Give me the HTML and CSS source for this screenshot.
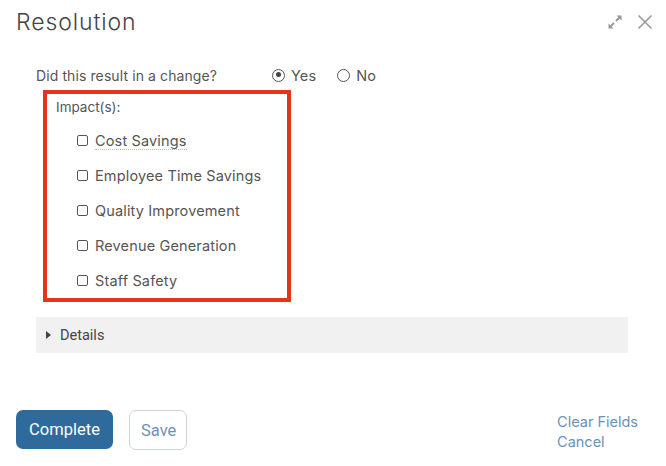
FILE: index.html
```html
<!DOCTYPE html>
<html>
<head>
<meta charset="utf-8">
<link rel="stylesheet" href="styles.css">
</head>
<body>
<div class="dialog">
  <div class="header">
    <h1 class="title">Resolution</h1>
    <div class="tools">
      <svg class="icon" width="18" height="18" viewBox="0 0 18 18"><g fill="#999"><path d="M10.5 2.5h5v5l-1.8-1.8-3 3-1.4-1.4 3-3z"/><path d="M7.5 15.5h-5v-5l1.8 1.8 3-3 1.4 1.4-3 3z"/></g></svg>
      <svg class="icon" width="18" height="18" viewBox="0 0 18 18"><path d="M2.5 2.5l13 13M15.5 2.5l-13 13" stroke="#999" stroke-width="1.6" fill="none"/></svg>
    </div>
  </div>
  <div class="form">
    <div class="question">
      <span class="qlabel">Did this result in a change?</span>
      <label class="radio"><span class="rdot checked"></span>Yes</label>
      <label class="radio"><span class="rdot"></span>No</label>
    </div>
    <div class="impact">
      <div class="impact-label">Impact(s):</div>
      <ul class="checks">
        <li><span class="cbox"></span><span class="dotted">Cost Savings</span></li>
        <li><span class="cbox"></span>Employee Time Savings</li>
        <li><span class="cbox"></span>Quality Improvement</li>
        <li><span class="cbox"></span>Revenue Generation</li>
        <li><span class="cbox"></span>Staff Safety</li>
      </ul>
    </div>
    <div class="details"><span class="caret"></span>Details</div>
  </div>
  <div class="footer">
    <div class="buttons">
      <button class="btn primary">Complete</button>
      <button class="btn secondary">Save</button>
    </div>
    <div class="links">
      <a class="link">Clear Fields</a>
      <a class="link">Cancel</a>
    </div>
  </div>
</div>
</body>
</html>
```
FILE: styles.css
```css
html, body { margin: 0; padding: 0; background: #fff; }
body { font-family: Inter, "Noto Sans", sans-serif; color: #555; width: 666px; height: 466px; overflow: hidden; }
.dialog { display: flex; flex-direction: column; height: 466px; }
.header { display: flex; justify-content: space-between; align-items: center; padding: 7px 12px 0 16px; height: 29px; }
.title { margin: 0; font-size: 23px; font-weight: 300; color: #444; letter-spacing: 0.9px; }
.tools { display: flex; gap: 12px; align-items: center; }
.icon { display: block; }
.form { padding: 30px 38px 0 36px; }
.question { display: flex; align-items: center; font-size: 14px; height: 18px; letter-spacing: 0.1px; }
.qlabel { width: 236px; }
.radio { display: flex; align-items: center; gap: 6px; margin-right: 21px; color: #555; font-size: 14.5px; }
.rdot { width: 13px; height: 13px; border: 1.3px solid #555; border-radius: 50%; position: relative; box-sizing: border-box; display: inline-block; }
.rdot.checked::after { content: ""; position: absolute; left: 2.7px; top: 2.7px; width: 5px; height: 5px; border-radius: 50%; background: #444; }
.impact { margin: 6px 0 0 7px; width: 248px; height: 212px; box-sizing: border-box; border: 4px solid #e5341c; padding: 5px 0 0 9px; }
.impact-label { font-size: 13.5px; color: #555; }
.checks { list-style: none; margin: 8px 0 0 0; padding: 0 0 0 21px; }
.checks li { display: flex; align-items: center; height: 35px; font-size: 14.5px; color: #555; letter-spacing: 0.15px; }
.cbox { width: 11px; height: 11px; border: 1.3px solid #555; border-radius: 2px; box-sizing: border-box; margin-right: 7px; }
.dotted { border-bottom: 1px dotted #bbb; line-height: 17px; }
.details { margin-top: 15px; height: 36px; background: #f1f1f1; display: flex; align-items: center; padding-left: 10px; font-family: Roboto, sans-serif; font-size: 14.5px; color: #444; }
.caret { width: 0; height: 0; border-top: 4px solid transparent; border-bottom: 4px solid transparent; border-left: 5px solid #444; margin-right: 9px; }
.footer { margin-top: auto; display: flex; justify-content: space-between; align-items: flex-start; padding: 0 28px 14px 16px; }
.buttons { display: flex; gap: 16px; }
.btn { font-family: Roboto, sans-serif; font-size: 16.5px; font-weight: 400; height: 39px; border-radius: 7px; padding: 0 11px; cursor: pointer; }
.primary { background: #2e6b9c; color: #fff; border: none; width: 97px; }
.secondary { background: #fff; color: #6e92b4; border: 1px solid #cdd3d8; width: 58px; height: 40px; }
.links { display: flex; flex-direction: column; padding-top: 2px; margin-left: -2px; }
.link { color: #6a93b7; font-size: 14.5px; line-height: 20px; }
```
